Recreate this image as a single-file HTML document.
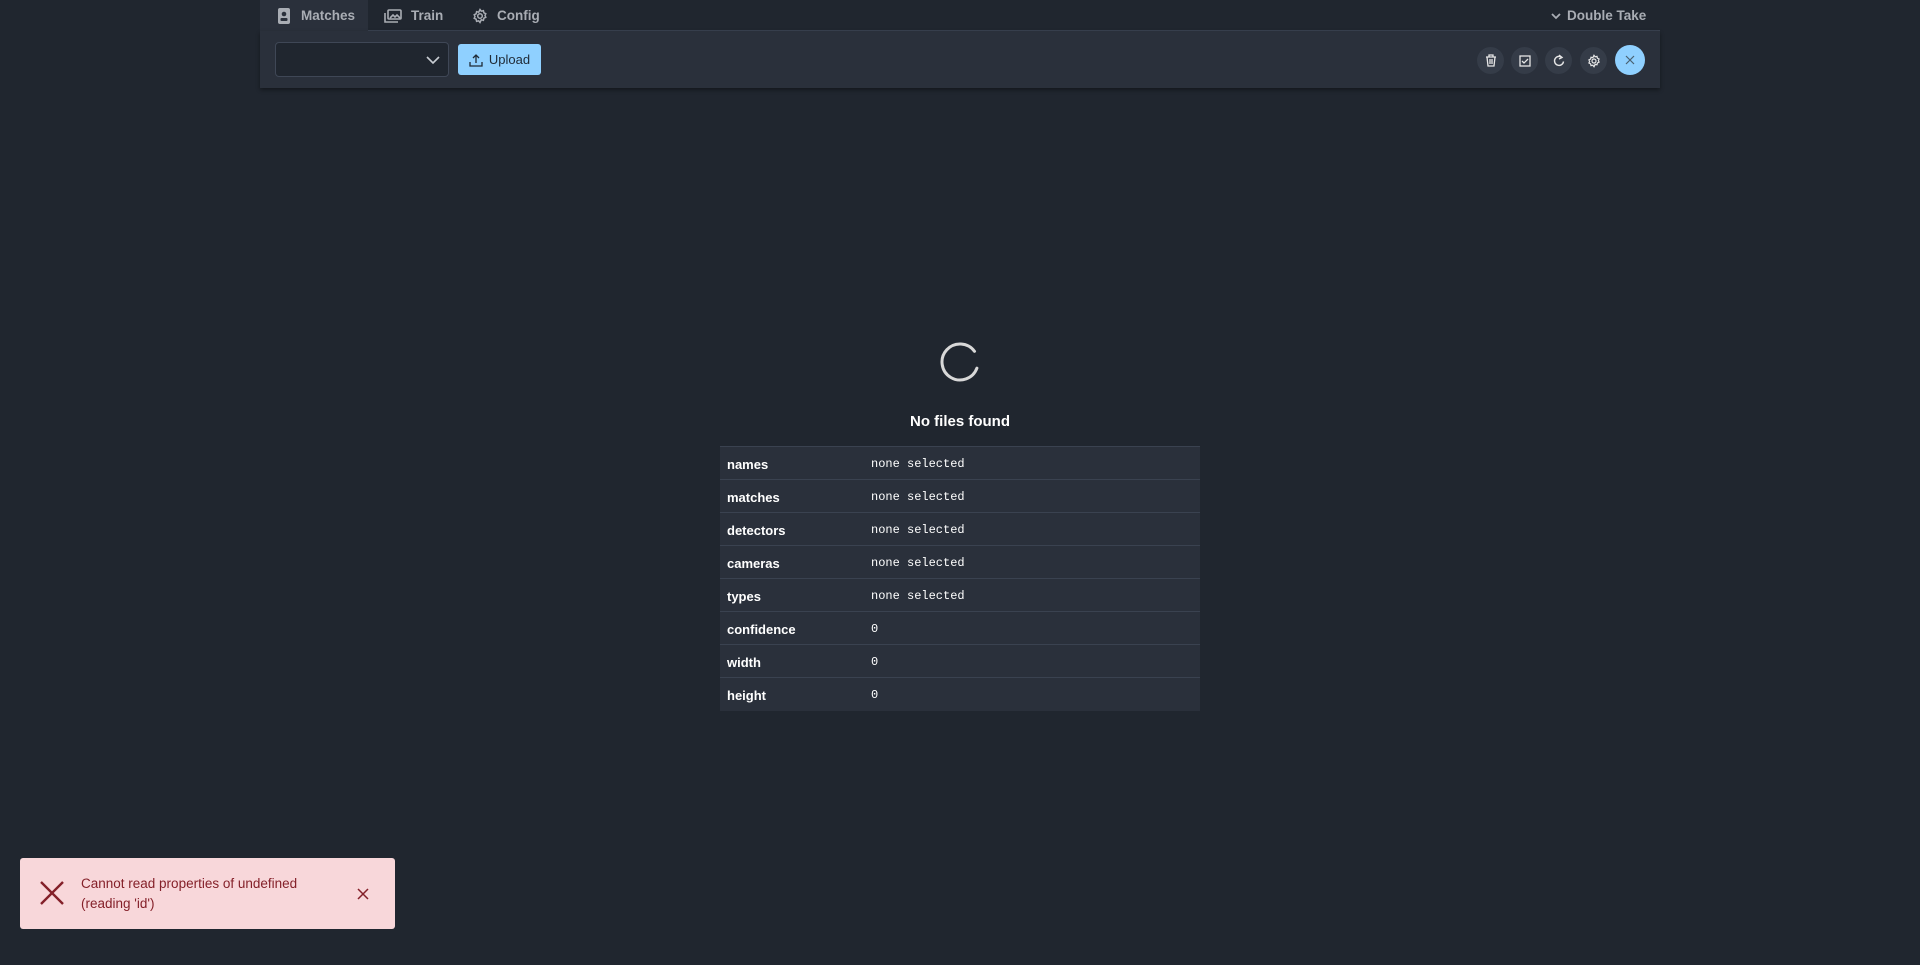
<!DOCTYPE html>
<html><head><meta charset="utf-8"><style>
*{box-sizing:border-box;margin:0;padding:0}
body{width:1920px;height:965px;background:#20262f;font-family:"Liberation Sans","DejaVu Sans",sans-serif;color:#e6e6e6;position:relative;overflow:hidden}
.tabs{position:absolute;left:260px;top:0;width:1400px;height:31px;background:#20262f;border-bottom:1px solid #3a4250}
.tab{position:absolute;top:0;height:31px;display:flex;align-items:center;font-size:13.5px;font-weight:bold;color:#a9adb4}
.tool{position:absolute;left:260px;top:31px;width:1400px;height:57px;background:#2a303b;box-shadow:0 2px 4px rgba(0,0,0,.4)}
.sel{position:absolute;left:15px;top:11px;width:174px;height:35px;border:1px solid #3f4756;border-radius:4px;background:#20262f}
.up{position:absolute;left:198px;top:13px;width:83px;height:31px;background:#8fd0ff;border-radius:3px;color:#1f2a36;font-size:13px;display:flex;align-items:center;justify-content:center;gap:6px}
.ib{position:absolute;top:16px;width:27px;height:27px;border-radius:50%;background:#353c48;display:flex;align-items:center;justify-content:center}
table{position:absolute;left:720px;top:446px;width:480px;border-collapse:collapse;background:#2a303b}
td{height:33px;border-top:1px solid #3a4250;font-size:13px;vertical-align:middle;padding-top:2px}
td.l{width:151px;padding-left:7px;font-weight:bold;color:#fff}
td.v{font-family:"Liberation Mono",monospace;font-size:12px;color:#fff}
.toast{position:absolute;left:20px;top:858px;width:375px;height:71px;background:#f8d7da;border-radius:3px;color:#842029;font-size:13.5px}
</style></head><body>
<div class="tabs">
 <div class="tab" style="left:0;width:108px;background:#2a303b;padding-left:17px">
  <svg width="14" height="16" viewBox="0 0 14 16"><rect x="1" y="0" width="12" height="16" rx="2" fill="#a9adb4"/><circle cx="7" cy="6" r="2.3" fill="#2a303b"/><rect x="3.5" y="10" width="7" height="3" rx="1" fill="#2a303b"/></svg>
  <span style="margin-left:10px">Matches</span></div>
 <div class="tab" style="left:124px"><svg width="18" height="14" viewBox="0 0 18 14" fill="none" stroke="#a9adb4" stroke-width="1.6"><rect x="4" y="1" width="13" height="9" rx="1"/><path d="M1 4v9h13"/><path d="M6 9l3-3 2 2 2-2 3 3"/></svg><span style="margin-left:9px">Train</span></div>
 <div class="tab" style="left:212px"><svg width="16" height="16" viewBox="0 0 16 16" fill="none" stroke="#a9adb4" stroke-width="1.5"><circle cx="8" cy="8" r="2.3"/><path d="M8 1.5l1.3 1.7 2.1-.5.5 2.1 1.9.9-.8 1.8.8 1.8-1.9.9-.5 2.1-2.1-.5L8 14.5l-1.3-1.7-2.1.5-.5-2.1-1.9-.9.8-1.8-.8-1.8 1.9-.9.5-2.1 2.1.5z"/></svg><span style="margin-left:9px">Config</span></div>
 <div class="tab" style="left:1290px;color:#a9adb4"><svg width="12" height="10" viewBox="0 0 12 10" fill="none" stroke="#a9adb4" stroke-width="1.8"><path d="M2 3l4 4 4-4"/></svg><span style="margin-left:5px">Double Take</span></div>
</div>
<div class="tool">
 <div class="sel"><svg style="position:absolute;right:8px;top:12px" width="14" height="10" viewBox="0 0 14 10" fill="none" stroke="#c9cdd3" stroke-width="1.6"><path d="M1 2l6 6 6-6"/></svg></div>
 <div class="up"><svg width="14" height="14" viewBox="0 0 14 14" fill="none" stroke="#1f2a36" stroke-width="1.3"><path d="M7 10V2M4 5l3-3 3 3M1 9v4h12V9"/></svg>Upload</div>
 <div class="ib" style="left:1217px"><svg width="12" height="13" viewBox="0 0 12 13" fill="none" stroke="#e6e6e6" stroke-width="1.3"><path d="M1 3h10M4 3V1h4v2M2 3l1 9h6l1-9M5 5v5M7 5v5"/></svg></div>
 <div class="ib" style="left:1251px"><svg width="12" height="12" viewBox="0 0 12 12" fill="none" stroke="#e6e6e6" stroke-width="1.3"><rect x="1" y="1" width="10" height="10"/><path d="M3 6l2 2 4-4"/></svg></div>
 <div class="ib" style="left:1285px"><svg width="12" height="13" viewBox="0 0 12 13" fill="none" stroke="#e6e6e6" stroke-width="1.4"><path d="M9 3.5A4.5 4.5 0 1 0 10.5 7.5"/><path d="M6 1l3 2.5-3 1.5"/></svg></div>
 <div class="ib" style="left:1320px"><svg width="14" height="14" viewBox="0 0 16 16" fill="none" stroke="#e6e6e6" stroke-width="1.4"><circle cx="8" cy="8" r="2.3"/><path d="M8 1.5l1.3 1.7 2.1-.5.5 2.1 1.9.9-.8 1.8.8 1.8-1.9.9-.5 2.1-2.1-.5L8 14.5l-1.3-1.7-2.1.5-.5-2.1-1.9-.9.8-1.8-.8-1.8 1.9-.9.5-2.1 2.1.5z"/></svg></div>
 <div class="ib" style="left:1355px;top:14px;width:30px;height:30px;background:#8fd0ff"><svg width="10" height="10" viewBox="0 0 10 10" stroke="#4a6070" stroke-width="1.2"><path d="M1 1l8 8M9 1l-8 8"/></svg></div>
</div>
<svg style="position:absolute;left:940px;top:342px" width="40" height="40" viewBox="0 0 40 40" fill="none"><path d="M38 20A18 18 0 1 1 30 5" transform="rotate(20 20 20)" stroke="#d8d8d8" stroke-width="3" stroke-linecap="round"/></svg>
<div style="position:absolute;left:720px;width:480px;top:413px;text-align:center;font-weight:bold;font-size:15px;color:#fff">No files found</div>
<table>
<tr><td class="l">names</td><td class="v">none selected</td></tr>
<tr><td class="l">matches</td><td class="v">none selected</td></tr>
<tr><td class="l">detectors</td><td class="v">none selected</td></tr>
<tr><td class="l">cameras</td><td class="v">none selected</td></tr>
<tr><td class="l">types</td><td class="v">none selected</td></tr>
<tr><td class="l">confidence</td><td class="v">0</td></tr>
<tr><td class="l">width</td><td class="v">0</td></tr>
<tr><td class="l">height</td><td class="v">0</td></tr>
</table>
<div class="toast">
 <svg style="position:absolute;left:19px;top:22px" width="26" height="26" viewBox="0 0 26 26" stroke="#842029" stroke-width="2.4"><path d="M2 2l22 22M24 2L2 24"/></svg>
 <div style="position:absolute;left:61px;top:16px;line-height:20px">Cannot read properties of undefined<br>(reading 'id')</div>
 <svg style="position:absolute;left:337px;top:30px" width="12" height="12" viewBox="0 0 12 12" stroke="#842029" stroke-width="1.5"><path d="M1 1l10 10M11 1L1 11"/></svg>
</div>
</body></html>
